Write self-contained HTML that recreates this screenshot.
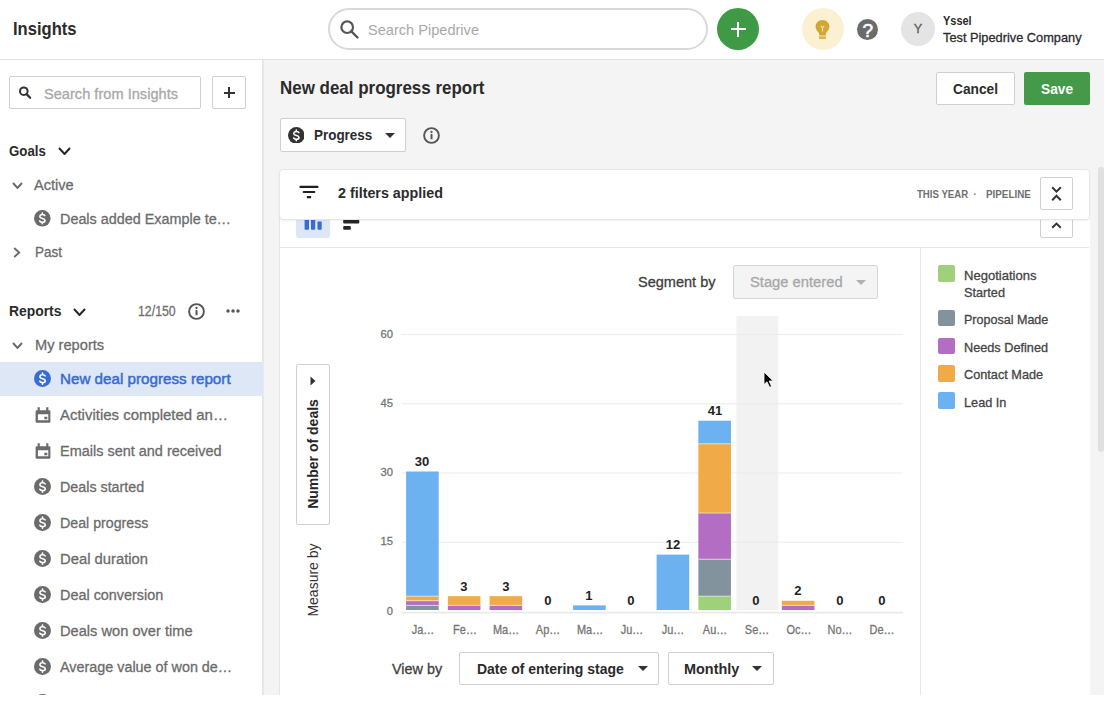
<!DOCTYPE html><html><head><meta charset="utf-8"><style>
html,body{margin:0;padding:0;}
body{width:1116px;height:706px;position:relative;overflow:hidden;background:#fff;font-family:"Liberation Sans",sans-serif;}
.abs{position:absolute;box-sizing:border-box;}
.t{font-family:"Liberation Sans",sans-serif;}
</style></head><body>
<div class="abs" style="left:0;top:0;width:1104px;height:59px;background:#fff;"></div>
<div class="abs" style="left:0;top:59px;width:1104px;height:1px;background:#e3e3e3;"></div>
<div class="abs" style="left:0;top:60px;width:263px;height:635px;background:#fff;"></div>
<div class="abs" style="left:262px;top:60px;width:1px;height:635px;background:#e4e4e4;"></div>
<div class="abs" style="left:263px;top:60px;width:1px;height:635px;background:#e9e9e9;"></div>
<div class="abs" style="left:264px;top:60px;width:840px;height:635px;background:#f4f4f4;"></div>
<div class="abs" style="left:328px;top:8px;width:380px;height:42px;border:2px solid #d9d9d9;border-radius:21px;background:#fff;"></div>
<svg style="position:absolute;left:338px;top:18px" width="22" height="22" viewBox="0 0 22 22"><circle cx="9.2" cy="9.2" r="5.8" stroke="#555" stroke-width="2.2" fill="none"/><path d="M13.4 13.4L19.5 19.5" stroke="#555" stroke-width="2.4" stroke-linecap="round"/></svg>
<div class="abs" style="left:717px;top:8px;width:42px;height:42px;border-radius:50%;background:#3f9a46;"></div>
<div class="abs" style="left:730.5px;top:28px;width:15px;height:2.2px;background:#fff;"></div>
<div class="abs" style="left:737px;top:21.5px;width:2.2px;height:15px;background:#fff;"></div>
<div class="abs" style="left:801.5px;top:8px;width:42px;height:42px;border-radius:50%;background:#fbf1d2;"></div>
<svg style="position:absolute;left:812px;top:19px" width="21" height="21" viewBox="0 0 21 21"><path d="M10.5 1C6.6 1 3.6 3.9 3.6 7.6c0 2.3 1.2 3.9 2.4 5.2.8.9 1.2 1.6 1.2 2.6V16h6.6v-.6c0-1 .4-1.7 1.2-2.6 1.2-1.3 2.4-2.9 2.4-5.2C17.4 3.9 14.4 1 10.5 1z" fill="#d4a536"/><rect x="7.2" y="16.6" width="6.6" height="3.4" rx="0.6" fill="#d4a536"/><path d="M8.9 6.9l1.6 1.9 1.6-1.9M10.5 8.8v3.6" stroke="#f6e3a8" stroke-width="1.2" fill="none"/><path d="M7.6 17.6h5.8M7.6 18.9h5.8" stroke="#f1dd9c" stroke-width="0.6"/></svg>
<div class="abs" style="left:857px;top:18.7px;width:21px;height:21px;border-radius:50%;background:#6b6b6b;"></div>
<div class="abs" style="left:857.3px;top:19.6px;width:21px;height:21px;text-align:center;font:19px/21px 'Liberation Sans';-webkit-text-stroke:0.6px #fff;color:#fff;">?</div>
<div class="abs" style="left:901px;top:12px;width:34px;height:34px;border-radius:50%;background:#e4e4e4;"></div>
<div class="abs" style="left:9px;top:76px;width:192px;height:33px;border:1px solid #cfcfcf;border-radius:2px;background:#fff;"></div>
<svg style="position:absolute;left:17px;top:85px" width="16" height="16" viewBox="0 0 16 16"><circle cx="6.8" cy="6.2" r="3.8" stroke="#333" stroke-width="2.0" fill="none"/><path d="M9.5 9.1L13.2 12.8" stroke="#333" stroke-width="2.2" stroke-linecap="round"/></svg>
<div class="abs" style="left:212px;top:76px;width:34px;height:33px;border:1px solid #cfcfcf;border-radius:2px;background:#fff;"></div>
<div class="abs" style="left:223.5px;top:91.6px;width:11px;height:2px;background:#333;"></div>
<div class="abs" style="left:228px;top:87.1px;width:2px;height:11px;background:#333;"></div>
<svg style="position:absolute;left:57.5px;top:147px" width="13" height="8" viewBox="0 0 13 8"><path d="M1 1 L6.5 7 L12 1" stroke="#262626" stroke-width="2.0" fill="none"/></svg>
<svg style="position:absolute;left:11.8px;top:181.8px" width="11" height="7" viewBox="0 0 11 7"><path d="M1 1 L5.5 6 L10 1" stroke="#6b6b6b" stroke-width="1.9" fill="none"/></svg>
<svg style="position:absolute;left:13px;top:246.8px" width="8" height="11" viewBox="0 0 8 11"><path d="M1.2 1 L6.2 5.5 L1.2 10" stroke="#6b6b6b" stroke-width="1.9" fill="none"/></svg>
<svg style="position:absolute;left:34.00px;top:210.00px" width="16.6" height="16.6" viewBox="0 0 16 16"><circle cx="8" cy="8" r="8" fill="#6b6b6b"/><path d="M10.5 5.5c-.45-.7-1.3-1.1-2.5-1.1-1.4 0-2.4.75-2.4 1.85 0 2.5 5 1.4 5 3.8 0 1.1-1 1.85-2.5 1.85-1.2 0-2.15-.55-2.6-1.3M8 2.9v1.5M8 11.9v1.4" stroke="#fff" stroke-width="1.5" fill="none" stroke-linecap="round"/></svg>
<svg style="position:absolute;left:72.5px;top:308px" width="13" height="8" viewBox="0 0 13 8"><path d="M1 1 L6.5 7 L12 1" stroke="#262626" stroke-width="2.0" fill="none"/></svg>
<svg style="position:absolute;left:188.10px;top:302.90px" width="17" height="17" viewBox="0 0 17 17"><circle cx="8.5" cy="8.5" r="7.4" stroke="#555" stroke-width="1.9" fill="none"/><rect x="7.5" y="7.1" width="2" height="5.2" rx="0.6" fill="#555"/><circle cx="8.5" cy="5.0" r="1.15" fill="#555"/></svg>
<svg style="position:absolute;left:226px;top:309px" width="14" height="4"><circle cx="2" cy="2" r="1.7" fill="#555"/><circle cx="7" cy="2" r="1.7" fill="#555"/><circle cx="12" cy="2" r="1.7" fill="#555"/></svg>
<svg style="position:absolute;left:12.2px;top:341.8px" width="11" height="7" viewBox="0 0 11 7"><path d="M1 1 L5.5 6 L10 1" stroke="#6b6b6b" stroke-width="1.9" fill="none"/></svg>
<div class="abs" style="left:0;top:362px;width:263px;height:34px;background:#dde7f6;"></div>
<svg style="position:absolute;left:34.00px;top:370.40px" width="17" height="17" viewBox="0 0 16 16"><circle cx="8" cy="8" r="8" fill="#3a6bd0"/><path d="M10.5 5.5c-.45-.7-1.3-1.1-2.5-1.1-1.4 0-2.4.75-2.4 1.85 0 2.5 5 1.4 5 3.8 0 1.1-1 1.85-2.5 1.85-1.2 0-2.15-.55-2.6-1.3M8 2.9v1.5M8 11.9v1.4" stroke="#fff" stroke-width="1.5" fill="none" stroke-linecap="round"/></svg>
<svg style="position:absolute;left:34.50px;top:407.30px" width="16" height="16" viewBox="0 0 16 16"><path d="M2.6 0.3h2.2v3h6.4v-3h2.2v3h0.8a1.2 1.2 0 0 1 1.2 1.2v10a1.2 1.2 0 0 1-1.2 1.2h-12.4a1.2 1.2 0 0 1-1.2-1.2v-10a1.2 1.2 0 0 1 1.2-1.2h0.8z M2.9 7.2v6.1h10.4V7.2z M9.4 9.8h2.9v2.4h-2.9z" fill="#6b6b6b" fill-rule="evenodd"/></svg>
<svg style="position:absolute;left:34.50px;top:443.30px" width="16" height="16" viewBox="0 0 16 16"><path d="M2.6 0.3h2.2v3h6.4v-3h2.2v3h0.8a1.2 1.2 0 0 1 1.2 1.2v10a1.2 1.2 0 0 1-1.2 1.2h-12.4a1.2 1.2 0 0 1-1.2-1.2v-10a1.2 1.2 0 0 1 1.2-1.2h0.8z M2.9 7.2v6.1h10.4V7.2z M9.4 9.8h2.9v2.4h-2.9z" fill="#6b6b6b" fill-rule="evenodd"/></svg>
<svg style="position:absolute;left:34.00px;top:478.40px" width="17" height="17" viewBox="0 0 16 16"><circle cx="8" cy="8" r="8" fill="#6b6b6b"/><path d="M10.5 5.5c-.45-.7-1.3-1.1-2.5-1.1-1.4 0-2.4.75-2.4 1.85 0 2.5 5 1.4 5 3.8 0 1.1-1 1.85-2.5 1.85-1.2 0-2.15-.55-2.6-1.3M8 2.9v1.5M8 11.9v1.4" stroke="#fff" stroke-width="1.5" fill="none" stroke-linecap="round"/></svg>
<svg style="position:absolute;left:34.00px;top:514.40px" width="17" height="17" viewBox="0 0 16 16"><circle cx="8" cy="8" r="8" fill="#6b6b6b"/><path d="M10.5 5.5c-.45-.7-1.3-1.1-2.5-1.1-1.4 0-2.4.75-2.4 1.85 0 2.5 5 1.4 5 3.8 0 1.1-1 1.85-2.5 1.85-1.2 0-2.15-.55-2.6-1.3M8 2.9v1.5M8 11.9v1.4" stroke="#fff" stroke-width="1.5" fill="none" stroke-linecap="round"/></svg>
<svg style="position:absolute;left:34.00px;top:550.40px" width="17" height="17" viewBox="0 0 16 16"><circle cx="8" cy="8" r="8" fill="#6b6b6b"/><path d="M10.5 5.5c-.45-.7-1.3-1.1-2.5-1.1-1.4 0-2.4.75-2.4 1.85 0 2.5 5 1.4 5 3.8 0 1.1-1 1.85-2.5 1.85-1.2 0-2.15-.55-2.6-1.3M8 2.9v1.5M8 11.9v1.4" stroke="#fff" stroke-width="1.5" fill="none" stroke-linecap="round"/></svg>
<svg style="position:absolute;left:34.00px;top:586.40px" width="17" height="17" viewBox="0 0 16 16"><circle cx="8" cy="8" r="8" fill="#6b6b6b"/><path d="M10.5 5.5c-.45-.7-1.3-1.1-2.5-1.1-1.4 0-2.4.75-2.4 1.85 0 2.5 5 1.4 5 3.8 0 1.1-1 1.85-2.5 1.85-1.2 0-2.15-.55-2.6-1.3M8 2.9v1.5M8 11.9v1.4" stroke="#fff" stroke-width="1.5" fill="none" stroke-linecap="round"/></svg>
<svg style="position:absolute;left:34.00px;top:622.40px" width="17" height="17" viewBox="0 0 16 16"><circle cx="8" cy="8" r="8" fill="#6b6b6b"/><path d="M10.5 5.5c-.45-.7-1.3-1.1-2.5-1.1-1.4 0-2.4.75-2.4 1.85 0 2.5 5 1.4 5 3.8 0 1.1-1 1.85-2.5 1.85-1.2 0-2.15-.55-2.6-1.3M8 2.9v1.5M8 11.9v1.4" stroke="#fff" stroke-width="1.5" fill="none" stroke-linecap="round"/></svg>
<svg style="position:absolute;left:34.00px;top:658.40px" width="17" height="17" viewBox="0 0 16 16"><circle cx="8" cy="8" r="8" fill="#6b6b6b"/><path d="M10.5 5.5c-.45-.7-1.3-1.1-2.5-1.1-1.4 0-2.4.75-2.4 1.85 0 2.5 5 1.4 5 3.8 0 1.1-1 1.85-2.5 1.85-1.2 0-2.15-.55-2.6-1.3M8 2.9v1.5M8 11.9v1.4" stroke="#fff" stroke-width="1.5" fill="none" stroke-linecap="round"/></svg>
<svg style="position:absolute;left:34.00px;top:694.40px" width="17" height="17" viewBox="0 0 16 16"><circle cx="8" cy="8" r="8" fill="#6b6b6b"/><path d="M10.5 5.5c-.45-.7-1.3-1.1-2.5-1.1-1.4 0-2.4.75-2.4 1.85 0 2.5 5 1.4 5 3.8 0 1.1-1 1.85-2.5 1.85-1.2 0-2.15-.55-2.6-1.3M8 2.9v1.5M8 11.9v1.4" stroke="#fff" stroke-width="1.5" fill="none" stroke-linecap="round"/></svg>
<div class="abs" style="left:280px;top:118px;width:126px;height:34px;border:1px solid #cfcfcf;border-radius:2px;background:#fff;"></div>
<svg style="position:absolute;left:287.90px;top:126.60px" width="16.6" height="16.6" viewBox="0 0 16 16"><circle cx="8" cy="8" r="8" fill="#333333"/><path d="M10.5 5.5c-.45-.7-1.3-1.1-2.5-1.1-1.4 0-2.4.75-2.4 1.85 0 2.5 5 1.4 5 3.8 0 1.1-1 1.85-2.5 1.85-1.2 0-2.15-.55-2.6-1.3M8 2.9v1.5M8 11.9v1.4" stroke="#fff" stroke-width="1.5" fill="none" stroke-linecap="round"/></svg>
<svg style="position:absolute;left:384.5px;top:133.2px" width="10" height="5"><path d="M0 0H10L5.0 5z" fill="#333"/></svg>
<svg style="position:absolute;left:422.90px;top:127.00px" width="17" height="17" viewBox="0 0 17 17"><circle cx="8.5" cy="8.5" r="7.4" stroke="#555" stroke-width="1.9" fill="none"/><rect x="7.5" y="7.1" width="2" height="5.2" rx="0.6" fill="#555"/><circle cx="8.5" cy="5.0" r="1.15" fill="#555"/></svg>
<div class="abs" style="left:936px;top:72px;width:79px;height:33px;border:1px solid #cfcfcf;border-radius:2px;background:#fff;"></div>
<div class="abs" style="left:1023.5px;top:72px;width:66.5px;height:33px;border-radius:2px;background:#449a48;"></div>
<div class="abs" style="left:279px;top:200px;width:811px;height:495px;background:#fff;border:1px solid #e5e5e5;border-bottom:none;border-right:none;"></div>
<div class="abs" style="left:280px;top:247px;width:809px;height:1px;background:#e6e6e6;"></div>
<div class="abs" style="left:920px;top:248px;width:1px;height:447px;background:#e6e6e6;"></div>
<div class="abs" style="left:296px;top:212px;width:34px;height:26px;border-radius:3px;background:#dce6f6;"></div>
<svg style="position:absolute;left:304px;top:214px" width="20" height="17"><rect x="0.6" y="1" width="4.4" height="14.7" rx="0.8" fill="#3a6bd0"/><rect x="7" y="1" width="4.2" height="14.7" rx="0.8" fill="#3a6bd0"/><rect x="13.5" y="7.5" width="4.2" height="8.2" rx="0.8" fill="#3a6bd0"/></svg>
<svg style="position:absolute;left:342px;top:218px" width="20" height="14"><rect x="1.2" y="1.7" width="16.1" height="3.8" rx="1" fill="#262626"/><rect x="1.2" y="8" width="7.6" height="3.7" rx="1" fill="#262626"/></svg>
<div class="abs" style="left:1040px;top:205px;width:33px;height:33px;border:1px solid #cfcfcf;border-radius:2px;background:#fff;"></div>
<svg style="position:absolute;left:1050px;top:218px" width="13" height="14"><path d="M2.2 9.8L6.5 5.6L10.8 9.8" stroke="#333" stroke-width="2" fill="none"/></svg>
<div class="abs" style="left:279px;top:169px;width:811px;height:51px;border:1px solid #e6e6e6;border-radius:4px;background:#fff;box-shadow:0 1px 2px rgba(0,0,0,0.06);"></div>
<svg style="position:absolute;left:298px;top:184px" width="22" height="16"><rect x="1.4" y="1.8" width="19.1" height="2.1" rx="1" fill="#1f1f1f"/><rect x="4.6" y="7" width="12.7" height="2.1" rx="1" fill="#1f1f1f"/><rect x="8.9" y="12.1" width="4.2" height="2.1" rx="0.5" fill="#1f1f1f"/></svg>
<div class="abs" style="left:1040px;top:177px;width:33px;height:33px;border:1px solid #cfcfcf;border-radius:2px;background:#fff;"></div>
<svg style="position:absolute;left:1050px;top:184px" width="13" height="20"><path d="M2.2 3.2L6.5 7.6L10.8 3.2M2.2 16.2L6.5 11.8L10.8 16.2" stroke="#333" stroke-width="2" fill="none"/></svg>
<div class="abs" style="left:1098px;top:167px;width:6px;height:285px;border-radius:3px;background:#e0e0e0;"></div>
<div class="abs" style="left:733px;top:265px;width:145px;height:34px;border:1px solid #d6d6d6;border-radius:2px;background:#f4f4f4;"></div>
<svg style="position:absolute;left:855.8px;top:279.8px" width="10" height="5"><path d="M0 0H10L5.0 5z" fill="#b0b0b0"/></svg>
<div class="abs" style="left:459px;top:652px;width:200px;height:33px;border:1px solid #cfcfcf;border-radius:2px;background:#fff;"></div>
<svg style="position:absolute;left:637.5px;top:666px" width="10" height="5"><path d="M0 0H10L5.0 5z" fill="#333"/></svg>
<div class="abs" style="left:668px;top:652px;width:106px;height:33px;border:1px solid #cfcfcf;border-radius:2px;background:#fff;"></div>
<svg style="position:absolute;left:752.3px;top:666.3px" width="10" height="5"><path d="M0 0H10L5.0 5z" fill="#333"/></svg>
<div class="abs" style="left:296px;top:364px;width:34px;height:161px;border:1px solid #cfcfcf;border-radius:2px;background:#fff;"></div>
<svg style="position:absolute;left:310px;top:376px" width="6" height="10"><path d="M0.5 0.5L5.5 5L0.5 9.5z" fill="#333"/></svg>
<div class="abs" id="nod" style="left:313px;top:454px;width:0;height:0;"><div style="position:absolute;left:0;top:0;transform:translate(-50%,-50%) rotate(-90deg);white-space:nowrap;font-weight:700;font-size:14px;line-height:14px;color:#262626;">Number of deals</div></div>
<div class="abs" id="mby" style="left:313px;top:580px;width:0;height:0;"><div style="position:absolute;left:0;top:0;transform:translate(-50%,-50%) rotate(-90deg);white-space:nowrap;font-weight:400;font-size:14px;line-height:14px;color:#333;">Measure by</div></div>
<div class="abs" style="left:938px;top:265.3px;width:17px;height:16.3px;border-radius:2px;background:#a0d07c;"></div>
<div class="abs" style="left:938px;top:310.1px;width:17px;height:16.3px;border-radius:2px;background:#82939d;"></div>
<div class="abs" style="left:938px;top:337.6px;width:17px;height:16.3px;border-radius:2px;background:#b36ec3;"></div>
<div class="abs" style="left:938px;top:365.3px;width:17px;height:16.3px;border-radius:2px;background:#f0ab48;"></div>
<div class="abs" style="left:938px;top:392.4px;width:17px;height:16.3px;border-radius:2px;background:#6cb1f0;"></div>
<svg width="1116" height="706" style="position:absolute;left:0;top:0">
<rect x="736.4" y="316" width="42" height="294.0" fill="#f2f2f2"/>
<rect x="401.5" y="611.8" width="501.5" height="1.6" fill="#e8e8e8"/>
<rect x="401.5" y="541.75" width="501.5" height="1" fill="#ececec"/>
<rect x="401.5" y="472.50" width="501.5" height="1" fill="#ececec"/>
<rect x="401.5" y="403.25" width="501.5" height="1" fill="#ececec"/>
<rect x="401.5" y="334.00" width="501.5" height="1" fill="#ececec"/>
<rect x="406.10" y="605.38" width="32.6" height="4.62" fill="#82939d"/>
<rect x="406.10" y="600.77" width="32.6" height="4.62" fill="#b36ec3"/>
<rect x="406.10" y="596.15" width="32.6" height="4.62" fill="#f0ab48"/>
<rect x="406.10" y="471.50" width="32.6" height="124.65" fill="#6cb1f0"/>
<rect x="406.10" y="604.88" width="32.6" height="1" fill="#ffffff" fill-opacity="0.55"/>
<rect x="406.10" y="600.27" width="32.6" height="1" fill="#ffffff" fill-opacity="0.55"/>
<rect x="406.10" y="595.65" width="32.6" height="1" fill="#ffffff" fill-opacity="0.55"/>
<rect x="447.85" y="605.38" width="32.6" height="4.62" fill="#b36ec3"/>
<rect x="447.85" y="596.15" width="32.6" height="9.23" fill="#f0ab48"/>
<rect x="447.85" y="604.88" width="32.6" height="1" fill="#ffffff" fill-opacity="0.55"/>
<rect x="489.60" y="605.38" width="32.6" height="4.62" fill="#b36ec3"/>
<rect x="489.60" y="596.15" width="32.6" height="9.23" fill="#f0ab48"/>
<rect x="489.60" y="604.88" width="32.6" height="1" fill="#ffffff" fill-opacity="0.55"/>
<rect x="573.10" y="605.38" width="32.6" height="4.62" fill="#6cb1f0"/>
<rect x="656.60" y="554.60" width="32.6" height="55.40" fill="#6cb1f0"/>
<rect x="698.35" y="596.15" width="32.6" height="13.85" fill="#9fd07a"/>
<rect x="698.35" y="559.22" width="32.6" height="36.93" fill="#82939d"/>
<rect x="698.35" y="513.05" width="32.6" height="46.17" fill="#b36ec3"/>
<rect x="698.35" y="443.80" width="32.6" height="69.25" fill="#f0ab48"/>
<rect x="698.35" y="420.72" width="32.6" height="23.08" fill="#6cb1f0"/>
<rect x="698.35" y="595.65" width="32.6" height="1" fill="#ffffff" fill-opacity="0.55"/>
<rect x="698.35" y="558.72" width="32.6" height="1" fill="#ffffff" fill-opacity="0.55"/>
<rect x="698.35" y="512.55" width="32.6" height="1" fill="#ffffff" fill-opacity="0.55"/>
<rect x="698.35" y="443.30" width="32.6" height="1" fill="#ffffff" fill-opacity="0.55"/>
<rect x="781.85" y="605.38" width="32.6" height="4.62" fill="#b36ec3"/>
<rect x="781.85" y="600.77" width="32.6" height="4.62" fill="#f0ab48"/>
<rect x="781.85" y="604.88" width="32.6" height="1" fill="#ffffff" fill-opacity="0.55"/>
</svg>
<svg style="position:absolute;left:763px;top:371px" width="12" height="18" viewBox="0 0 12 18"><path d="M1 1 L1 13.5 L4 10.8 L6.6 16.3 L8.6 15.4 L6.1 10 L10.2 10 Z" fill="#000" stroke="#fff" stroke-width="0.8"/></svg>
<div class="t" id="insights" style="position:absolute;left:13.40px;top:19.55px;font-size:18.84px;line-height:18.84px;font-weight:700;color:#2b2b2b;white-space:nowrap;transform:scaleX(0.8797);transform-origin:left top;">Insights</div>
<div class="t" id="searchpd" style="position:absolute;left:367.70px;top:22.98px;font-size:14.20px;line-height:14.20px;font-weight:400;color:#a8a8a8;white-space:nowrap;transform:scaleX(1.0273);transform-origin:left top;">Search Pipedrive</div>
<div class="t" id="yssel" style="position:absolute;left:943.20px;top:13.89px;font-size:13.48px;line-height:13.48px;font-weight:700;color:#2b2b2b;white-space:nowrap;transform:scaleX(0.8124);transform-origin:left top;">Yssel</div>
<div class="t" id="company" style="position:absolute;left:943.00px;top:31.07px;font-size:13.62px;line-height:13.62px;font-weight:400;color:#2b2b2b;white-space:nowrap;transform:scaleX(0.9396);transform-origin:left top;-webkit-text-stroke:0.3px currentColor;">Test Pipedrive Company</div>
<div class="t" id="avy" style="position:absolute;left:918.00px;top:21.97px;font-size:13.62px;line-height:13.62px;font-weight:400;color:#595959;white-space:nowrap;transform:translateX(-50%) scaleX(0.9363);transform-origin:center top;-webkit-text-stroke:0.3px currentColor;">Y</div>
<div class="t" id="sfi" style="position:absolute;left:44.00px;top:85.62px;font-size:15.22px;line-height:15.22px;font-weight:400;color:#a8a8a8;white-space:nowrap;transform:scaleX(0.9601);transform-origin:left top;-webkit-text-stroke:0.3px currentColor;">Search from Insights</div>
<div class="t" id="goals" style="position:absolute;left:9.20px;top:143.58px;font-size:14.20px;line-height:14.20px;font-weight:700;color:#2b2b2b;white-space:nowrap;transform:scaleX(0.9331);transform-origin:left top;">Goals</div>
<div class="t" id="active" style="position:absolute;left:34.00px;top:176.77px;font-size:15.51px;line-height:15.51px;font-weight:400;color:#6b6b6b;white-space:nowrap;transform:scaleX(0.9403);transform-origin:left top;-webkit-text-stroke:0.3px currentColor;">Active</div>
<div class="t" id="dealsadded" style="position:absolute;left:59.90px;top:210.87px;font-size:15.51px;line-height:15.51px;font-weight:400;color:#6b6b6b;white-space:nowrap;transform:scaleX(0.9274);transform-origin:left top;-webkit-text-stroke:0.3px currentColor;">Deals added Example te…</div>
<div class="t" id="past" style="position:absolute;left:34.60px;top:244.37px;font-size:15.51px;line-height:15.51px;font-weight:400;color:#6b6b6b;white-space:nowrap;transform:scaleX(0.8705);transform-origin:left top;-webkit-text-stroke:0.3px currentColor;">Past</div>
<div class="t" id="reports" style="position:absolute;left:9.30px;top:304.29px;font-size:14.78px;line-height:14.78px;font-weight:700;color:#2b2b2b;white-space:nowrap;transform:scaleX(0.9391);transform-origin:left top;">Reports</div>
<div class="t" id="cnt" style="position:absolute;left:137.50px;top:304.33px;font-size:14.49px;line-height:14.49px;font-weight:400;color:#707070;white-space:nowrap;transform:scaleX(0.8508);transform-origin:left top;-webkit-text-stroke:0.3px currentColor;">12/150</div>
<div class="t" id="myrep" style="position:absolute;left:34.50px;top:337.47px;font-size:15.51px;line-height:15.51px;font-weight:400;color:#6b6b6b;white-space:nowrap;transform:scaleX(0.9451);transform-origin:left top;-webkit-text-stroke:0.3px currentColor;">My reports</div>
<div class="t" id="row0" style="position:absolute;left:60.10px;top:370.97px;font-size:15.51px;line-height:15.51px;font-weight:400;color:#3a6bd0;white-space:nowrap;transform:scaleX(0.9803);transform-origin:left top;-webkit-text-stroke:0.5px currentColor;">New deal progress report</div>
<div class="t" id="row1" style="position:absolute;left:60.40px;top:407.00px;font-size:15.36px;line-height:15.36px;font-weight:400;color:#6b6b6b;white-space:nowrap;transform:scaleX(0.9736);transform-origin:left top;-webkit-text-stroke:0.3px currentColor;">Activities completed an…</div>
<div class="t" id="row2" style="position:absolute;left:60.40px;top:443.00px;font-size:15.36px;line-height:15.36px;font-weight:400;color:#6b6b6b;white-space:nowrap;transform:scaleX(0.9417);transform-origin:left top;-webkit-text-stroke:0.3px currentColor;">Emails sent and received</div>
<div class="t" id="row3" style="position:absolute;left:60.40px;top:479.00px;font-size:15.36px;line-height:15.36px;font-weight:400;color:#6b6b6b;white-space:nowrap;transform:scaleX(0.9304);transform-origin:left top;-webkit-text-stroke:0.3px currentColor;">Deals started</div>
<div class="t" id="row4" style="position:absolute;left:60.40px;top:515.00px;font-size:15.36px;line-height:15.36px;font-weight:400;color:#6b6b6b;white-space:nowrap;transform:scaleX(0.9244);transform-origin:left top;-webkit-text-stroke:0.3px currentColor;">Deal progress</div>
<div class="t" id="row5" style="position:absolute;left:60.40px;top:551.00px;font-size:15.36px;line-height:15.36px;font-weight:400;color:#6b6b6b;white-space:nowrap;transform:scaleX(0.9631);transform-origin:left top;-webkit-text-stroke:0.3px currentColor;">Deal duration</div>
<div class="t" id="row6" style="position:absolute;left:60.40px;top:587.00px;font-size:15.36px;line-height:15.36px;font-weight:400;color:#6b6b6b;white-space:nowrap;transform:scaleX(0.9379);transform-origin:left top;-webkit-text-stroke:0.3px currentColor;">Deal conversion</div>
<div class="t" id="row7" style="position:absolute;left:60.40px;top:623.00px;font-size:15.36px;line-height:15.36px;font-weight:400;color:#6b6b6b;white-space:nowrap;transform:scaleX(0.9529);transform-origin:left top;-webkit-text-stroke:0.3px currentColor;">Deals won over time</div>
<div class="t" id="row8" style="position:absolute;left:60.40px;top:659.00px;font-size:15.36px;line-height:15.36px;font-weight:400;color:#6b6b6b;white-space:nowrap;transform:scaleX(0.9351);transform-origin:left top;-webkit-text-stroke:0.3px currentColor;">Average value of won de…</div>
<div class="t" id="title" style="position:absolute;left:279.90px;top:79.61px;font-size:17.83px;line-height:17.83px;font-weight:700;color:#2b2b2b;white-space:nowrap;transform:scaleX(0.9507);transform-origin:left top;">New deal progress report</div>
<div class="t" id="progress" style="position:absolute;left:313.70px;top:128.09px;font-size:14.78px;line-height:14.78px;font-weight:700;color:#2b2b2b;white-space:nowrap;transform:scaleX(0.9105);transform-origin:left top;">Progress</div>
<div class="t" id="cancel" style="position:absolute;left:953.20px;top:80.60px;font-size:15.36px;line-height:15.36px;font-weight:700;color:#2b2b2b;white-space:nowrap;transform:scaleX(0.8933);transform-origin:left top;">Cancel</div>
<div class="t" id="save" style="position:absolute;left:1041.20px;top:80.60px;font-size:15.36px;line-height:15.36px;font-weight:700;color:#ffffff;white-space:nowrap;transform:scaleX(0.8920);transform-origin:left top;">Save</div>
<div class="t" id="filters" style="position:absolute;left:338.40px;top:185.53px;font-size:14.49px;line-height:14.49px;font-weight:700;color:#2b2b2b;white-space:nowrap;transform:scaleX(0.9873);transform-origin:left top;">2 filters applied</div>
<div class="t" id="thisyear" style="position:absolute;left:917.00px;top:188.90px;font-size:10.87px;line-height:10.87px;font-weight:700;color:#707070;white-space:nowrap;transform:scaleX(0.8851);transform-origin:left top;">THIS YEAR</div>
<div class="t" id="dot" style="position:absolute;left:975.30px;top:188.90px;font-size:10.87px;line-height:10.87px;font-weight:700;color:#707070;white-space:nowrap;transform:translateX(-50%) scaleX(0.8276);transform-origin:center top;">·</div>
<div class="t" id="pipeline" style="position:absolute;left:985.70px;top:188.90px;font-size:10.87px;line-height:10.87px;font-weight:700;color:#707070;white-space:nowrap;transform:scaleX(0.9053);transform-origin:left top;">PIPELINE</div>
<div class="t" id="segby" style="position:absolute;left:638.10px;top:274.91px;font-size:14.64px;line-height:14.64px;font-weight:400;color:#404040;white-space:nowrap;transform:scaleX(0.9930);transform-origin:left top;-webkit-text-stroke:0.3px currentColor;">Segment by</div>
<div class="t" id="stage" style="position:absolute;left:750.40px;top:274.91px;font-size:14.64px;line-height:14.64px;font-weight:400;color:#a8a8a8;white-space:nowrap;transform:scaleX(1.0077);transform-origin:left top;-webkit-text-stroke:0.3px currentColor;">Stage entered</div>
<div class="t" id="viewby" style="position:absolute;left:392.00px;top:661.91px;font-size:14.64px;line-height:14.64px;font-weight:400;color:#404040;white-space:nowrap;transform:scaleX(0.9833);transform-origin:left top;-webkit-text-stroke:0.3px currentColor;">View by</div>
<div class="t" id="doe" style="position:absolute;left:477.10px;top:662.21px;font-size:14.64px;line-height:14.64px;font-weight:700;color:#2b2b2b;white-space:nowrap;transform:scaleX(0.9558);transform-origin:left top;">Date of entering stage</div>
<div class="t" id="monthly" style="position:absolute;left:684.10px;top:662.21px;font-size:14.64px;line-height:14.64px;font-weight:700;color:#2b2b2b;white-space:nowrap;transform:scaleX(0.9864);transform-origin:left top;">Monthly</div>
<div class="t" id="leg0" style="position:absolute;left:963.80px;top:268.96px;font-size:13.04px;line-height:13.04px;font-weight:400;color:#454545;white-space:nowrap;transform:scaleX(1.0006);transform-origin:left top;-webkit-text-stroke:0.3px currentColor;">Negotiations</div>
<div class="t" id="leg1" style="position:absolute;left:963.80px;top:285.76px;font-size:13.04px;line-height:13.04px;font-weight:400;color:#454545;white-space:nowrap;transform:scaleX(0.9750);transform-origin:left top;-webkit-text-stroke:0.3px currentColor;">Started</div>
<div class="t" id="leg2" style="position:absolute;left:963.80px;top:312.96px;font-size:13.04px;line-height:13.04px;font-weight:400;color:#454545;white-space:nowrap;transform:scaleX(0.9617);transform-origin:left top;-webkit-text-stroke:0.3px currentColor;">Proposal Made</div>
<div class="t" id="leg3" style="position:absolute;left:963.80px;top:340.66px;font-size:13.04px;line-height:13.04px;font-weight:400;color:#454545;white-space:nowrap;transform:scaleX(0.9750);transform-origin:left top;-webkit-text-stroke:0.3px currentColor;">Needs Defined</div>
<div class="t" id="leg4" style="position:absolute;left:963.80px;top:367.86px;font-size:13.04px;line-height:13.04px;font-weight:400;color:#454545;white-space:nowrap;transform:scaleX(0.9750);transform-origin:left top;-webkit-text-stroke:0.3px currentColor;">Contact Made</div>
<div class="t" id="leg5" style="position:absolute;left:963.80px;top:395.56px;font-size:13.04px;line-height:13.04px;font-weight:400;color:#454545;white-space:nowrap;transform:scaleX(0.9750);transform-origin:left top;-webkit-text-stroke:0.3px currentColor;">Lead In</div>
<div class="t" id="ya0" style="position:absolute;left:393.40px;top:605.69px;font-size:11.59px;line-height:11.59px;font-weight:400;color:#757575;white-space:nowrap;transform:translateX(-100%) scaleX(0.9608);transform-origin:right top;-webkit-text-stroke:0.3px currentColor;">0</div>
<div class="t" id="ya1" style="position:absolute;left:393.40px;top:536.44px;font-size:11.59px;line-height:11.59px;font-weight:400;color:#757575;white-space:nowrap;transform:translateX(-100%) scaleX(0.9697);transform-origin:right top;-webkit-text-stroke:0.3px currentColor;">15</div>
<div class="t" id="ya2" style="position:absolute;left:393.40px;top:467.19px;font-size:11.59px;line-height:11.59px;font-weight:400;color:#757575;white-space:nowrap;transform:translateX(-100%) scaleX(0.9697);transform-origin:right top;-webkit-text-stroke:0.3px currentColor;">30</div>
<div class="t" id="ya3" style="position:absolute;left:393.40px;top:397.94px;font-size:11.59px;line-height:11.59px;font-weight:400;color:#757575;white-space:nowrap;transform:translateX(-100%) scaleX(0.9697);transform-origin:right top;-webkit-text-stroke:0.3px currentColor;">45</div>
<div class="t" id="ya4" style="position:absolute;left:393.40px;top:328.69px;font-size:11.59px;line-height:11.59px;font-weight:400;color:#757575;white-space:nowrap;transform:translateX(-100%) scaleX(0.9697);transform-origin:right top;-webkit-text-stroke:0.3px currentColor;">60</div>
<div class="t" id="xm0" style="position:absolute;left:422.90px;top:623.75px;font-size:12.46px;line-height:12.46px;font-weight:400;color:#757575;white-space:nowrap;transform:translateX(-50%) scaleX(0.8800);transform-origin:center top;-webkit-text-stroke:0.3px currentColor;">Ja…</div>
<div class="t" id="xm1" style="position:absolute;left:464.65px;top:623.75px;font-size:12.46px;line-height:12.46px;font-weight:400;color:#757575;white-space:nowrap;transform:translateX(-50%) scaleX(0.8800);transform-origin:center top;-webkit-text-stroke:0.3px currentColor;">Fe…</div>
<div class="t" id="xm2" style="position:absolute;left:506.40px;top:623.75px;font-size:12.46px;line-height:12.46px;font-weight:400;color:#757575;white-space:nowrap;transform:translateX(-50%) scaleX(0.8800);transform-origin:center top;-webkit-text-stroke:0.3px currentColor;">Ma…</div>
<div class="t" id="xm3" style="position:absolute;left:548.15px;top:623.75px;font-size:12.46px;line-height:12.46px;font-weight:400;color:#757575;white-space:nowrap;transform:translateX(-50%) scaleX(0.8800);transform-origin:center top;-webkit-text-stroke:0.3px currentColor;">Ap…</div>
<div class="t" id="xm4" style="position:absolute;left:589.90px;top:623.75px;font-size:12.46px;line-height:12.46px;font-weight:400;color:#757575;white-space:nowrap;transform:translateX(-50%) scaleX(0.8800);transform-origin:center top;-webkit-text-stroke:0.3px currentColor;">Ma…</div>
<div class="t" id="xm5" style="position:absolute;left:631.65px;top:623.75px;font-size:12.46px;line-height:12.46px;font-weight:400;color:#757575;white-space:nowrap;transform:translateX(-50%) scaleX(0.8800);transform-origin:center top;-webkit-text-stroke:0.3px currentColor;">Ju…</div>
<div class="t" id="xm6" style="position:absolute;left:673.40px;top:623.75px;font-size:12.46px;line-height:12.46px;font-weight:400;color:#757575;white-space:nowrap;transform:translateX(-50%) scaleX(0.8800);transform-origin:center top;-webkit-text-stroke:0.3px currentColor;">Ju…</div>
<div class="t" id="xm7" style="position:absolute;left:715.15px;top:623.75px;font-size:12.46px;line-height:12.46px;font-weight:400;color:#757575;white-space:nowrap;transform:translateX(-50%) scaleX(0.8800);transform-origin:center top;-webkit-text-stroke:0.3px currentColor;">Au…</div>
<div class="t" id="xm8" style="position:absolute;left:756.90px;top:623.75px;font-size:12.46px;line-height:12.46px;font-weight:400;color:#757575;white-space:nowrap;transform:translateX(-50%) scaleX(0.8800);transform-origin:center top;-webkit-text-stroke:0.3px currentColor;">Se…</div>
<div class="t" id="xm9" style="position:absolute;left:798.65px;top:623.75px;font-size:12.46px;line-height:12.46px;font-weight:400;color:#757575;white-space:nowrap;transform:translateX(-50%) scaleX(0.8800);transform-origin:center top;-webkit-text-stroke:0.3px currentColor;">Oc…</div>
<div class="t" id="xm10" style="position:absolute;left:840.40px;top:623.75px;font-size:12.46px;line-height:12.46px;font-weight:400;color:#757575;white-space:nowrap;transform:translateX(-50%) scaleX(0.8800);transform-origin:center top;-webkit-text-stroke:0.3px currentColor;">No…</div>
<div class="t" id="xm11" style="position:absolute;left:882.15px;top:623.75px;font-size:12.46px;line-height:12.46px;font-weight:400;color:#757575;white-space:nowrap;transform:translateX(-50%) scaleX(0.8800);transform-origin:center top;-webkit-text-stroke:0.3px currentColor;">De…</div>
<div class="t" id="val0" style="position:absolute;left:422.40px;top:455.09px;font-size:13.48px;line-height:13.48px;font-weight:700;color:#1f1f1f;white-space:nowrap;transform:translateX(-50%) scaleX(0.9700);transform-origin:center top;">30</div>
<div class="t" id="val1" style="position:absolute;left:464.15px;top:579.74px;font-size:13.48px;line-height:13.48px;font-weight:700;color:#1f1f1f;white-space:nowrap;transform:translateX(-50%) scaleX(0.9700);transform-origin:center top;">3</div>
<div class="t" id="val2" style="position:absolute;left:505.90px;top:579.74px;font-size:13.48px;line-height:13.48px;font-weight:700;color:#1f1f1f;white-space:nowrap;transform:translateX(-50%) scaleX(0.9700);transform-origin:center top;">3</div>
<div class="t" id="val3" style="position:absolute;left:547.65px;top:593.89px;font-size:13.48px;line-height:13.48px;font-weight:700;color:#1f1f1f;white-space:nowrap;transform:translateX(-50%) scaleX(0.9700);transform-origin:center top;">0</div>
<div class="t" id="val4" style="position:absolute;left:589.40px;top:588.97px;font-size:13.48px;line-height:13.48px;font-weight:700;color:#1f1f1f;white-space:nowrap;transform:translateX(-50%) scaleX(0.9700);transform-origin:center top;">1</div>
<div class="t" id="val5" style="position:absolute;left:631.15px;top:593.89px;font-size:13.48px;line-height:13.48px;font-weight:700;color:#1f1f1f;white-space:nowrap;transform:translateX(-50%) scaleX(0.9700);transform-origin:center top;">0</div>
<div class="t" id="val6" style="position:absolute;left:672.90px;top:538.19px;font-size:13.48px;line-height:13.48px;font-weight:700;color:#1f1f1f;white-space:nowrap;transform:translateX(-50%) scaleX(0.9700);transform-origin:center top;">12</div>
<div class="t" id="val7" style="position:absolute;left:714.65px;top:404.31px;font-size:13.48px;line-height:13.48px;font-weight:700;color:#1f1f1f;white-space:nowrap;transform:translateX(-50%) scaleX(0.9700);transform-origin:center top;">41</div>
<div class="t" id="val8" style="position:absolute;left:756.40px;top:593.89px;font-size:13.48px;line-height:13.48px;font-weight:700;color:#1f1f1f;white-space:nowrap;transform:translateX(-50%) scaleX(0.9700);transform-origin:center top;">0</div>
<div class="t" id="val9" style="position:absolute;left:798.15px;top:584.36px;font-size:13.48px;line-height:13.48px;font-weight:700;color:#1f1f1f;white-space:nowrap;transform:translateX(-50%) scaleX(0.9700);transform-origin:center top;">2</div>
<div class="t" id="val10" style="position:absolute;left:839.90px;top:593.89px;font-size:13.48px;line-height:13.48px;font-weight:700;color:#1f1f1f;white-space:nowrap;transform:translateX(-50%) scaleX(0.9700);transform-origin:center top;">0</div>
<div class="t" id="val11" style="position:absolute;left:881.65px;top:593.89px;font-size:13.48px;line-height:13.48px;font-weight:700;color:#1f1f1f;white-space:nowrap;transform:translateX(-50%) scaleX(0.9700);transform-origin:center top;">0</div>
<div class="abs" style="left:0;top:695px;width:1116px;height:11px;background:#fff;"></div>
<div class="abs" style="left:1104px;top:0;width:12px;height:706px;background:#fff;"></div>
</body></html>
